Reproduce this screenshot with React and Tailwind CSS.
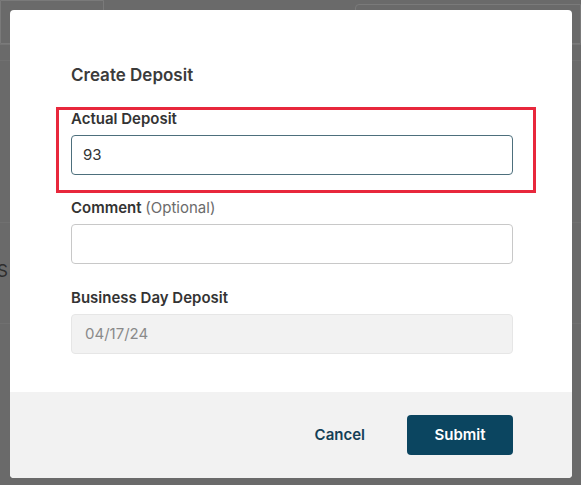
export default function App() {
  const font = { fontFamily: 'Inter, "Noto Sans", sans-serif' };
  return (
    <div className="relative w-[581px] h-[485px] overflow-hidden bg-[#6a6a6a]" style={font}>
      {/* dimmed page behind */}
      <div className="flex flex-col">
        <div className="flex justify-between h-[45px] border-b border-[#757575]">
          <div className="w-[104px] h-[44px] border border-[#7a7a7a] rounded-br-[4px]" />
          <div className="w-[226px] h-[40px] mt-[4px] border border-[#7a7a7a] rounded-tl-[4px]" />
        </div>
        <div className="h-[16px] border-b border-[#707070]" />
        <div className="h-[162px] border-b border-[#707070]" />
        <div className="h-[101px] border-b border-[#707070] flex flex-col pt-[38px]">
          <div className="h-[22px] flex items-center text-[17px] text-[#2e2e2e] -ml-[3px]">S</div>
        </div>
      </div>

      {/* modal */}
      <div className="absolute left-[10px] top-[10px] w-[562px] h-[468px] bg-white rounded-[4px] flex flex-col overflow-hidden">
        <div className="flex-1 flex flex-col pt-[53px] pl-[61px] pr-[59px]">
          <h2 className="text-[17px] leading-[24px] font-semibold text-[#3b3b3b]">Create Deposit</h2>

          <div className="relative mt-[22px] flex flex-col gap-[6px]">
            <div className="absolute -top-[2px] -left-[15px] -right-[23px] -bottom-[18px] border-[3px] border-[#e8283c]" />
            <label className="text-[15px] leading-[20px] font-semibold text-[#333]">Actual Deposit</label>
            <div className="h-[40px] border border-[#4d6f7c] rounded-[4px] flex items-center px-[11px] text-[15px] text-[#333]">93</div>
          </div>

          <div className="mt-[23px] flex flex-col gap-[6px]">
            <label className="text-[15px] leading-[20px] font-semibold text-[#333]">
              Comment <span className="font-normal text-[#6b6b6b]">(Optional)</span>
            </label>
            <div className="h-[40px] border border-[#c8c8c8] rounded-[4px]" />
          </div>

          <div className="mt-[24px] flex flex-col gap-[6px]">
            <label className="text-[15px] leading-[20px] font-semibold text-[#333]">Business Day Deposit</label>
            <div className="h-[40px] border border-[#e6e6e6] bg-[#f2f2f2] rounded-[4px] flex items-center px-[13px] text-[15px] text-[#8a8a8a]">04/17/24</div>
          </div>
        </div>

        <div className="h-[86px] bg-[#f2f2f2] flex items-center justify-end pr-[59px] gap-[42px]">
          <button className="text-[15px] font-semibold text-[#143f57]">Cancel</button>
          <button className="w-[106px] h-[40px] rounded-[4px] bg-[#0b4560] text-white text-[15px] font-semibold">Submit</button>
        </div>
      </div>
    </div>
  );
}
